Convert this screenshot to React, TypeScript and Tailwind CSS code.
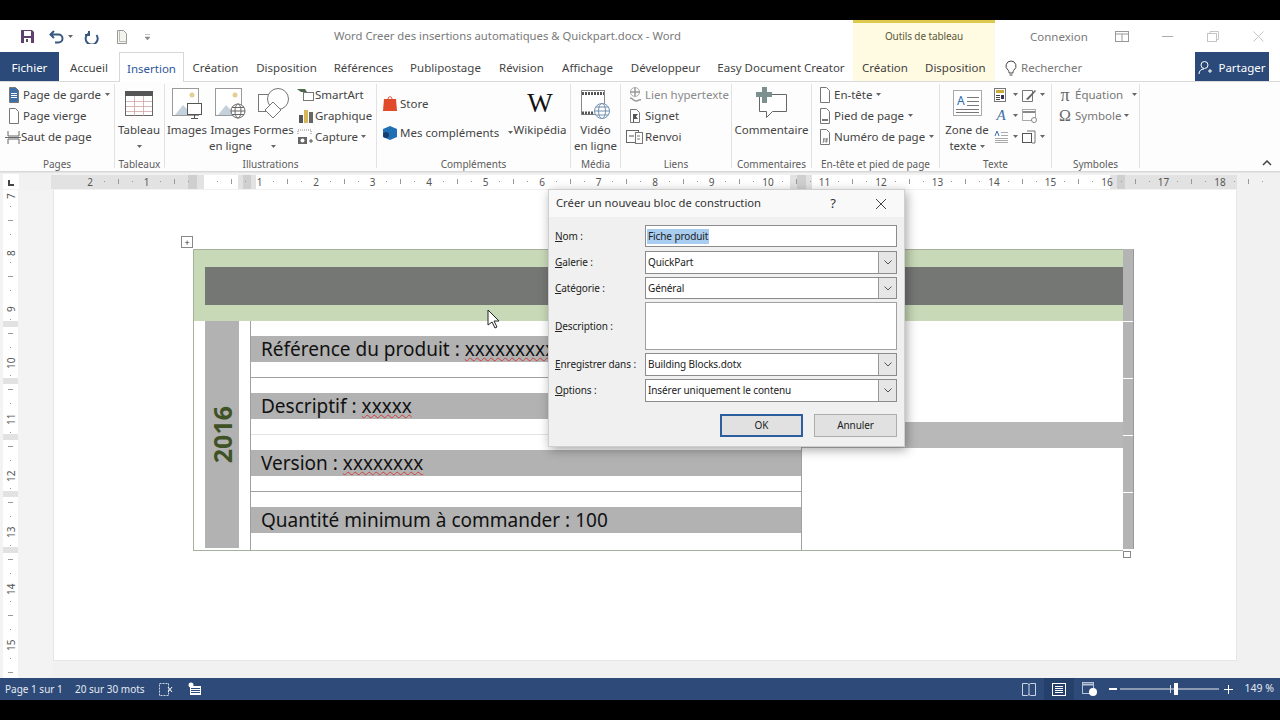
import React from "react";

const S = ({ w, h, children, className = "" }: { w: number; h: number; children: React.ReactNode; className?: string }) => (
  <svg width={w} height={h} viewBox={`0 0 ${w} ${h}`} fill="none" className={`shrink-0 ${className}`}>
    {children}
  </svg>
);

const Caret = ({ className = "" }: { className?: string }) => (
  <svg width="5" height="3" viewBox="0 0 5 3" className={`shrink-0 ${className}`}><path d="M0 0h5L2.5 3z" fill="#666" /></svg>
);

const PageIcon = ({ kind }: { kind: number }) => (
  <S w={14} h={16}>
    <path d="M2.5 .5h6l3 3v12h-9z" fill={kind === 0 ? "#3f6ea5" : "#fff"} stroke="#777" />
    {kind === 0 && <path d="M4 6.500h6M4 8.500h6M4 10.500h6" stroke="#fff" />}
    {kind === 2 && <path d="M4 12h6" stroke="#777" strokeWidth="2" />}
    {kind === 3 && <path d="M5 10h5M5 12h5M6 9l-1 5M9 9l-1 5" stroke="#666" strokeWidth=".7" />}
  </S>
);

const SmallItem = ({ icon, label, caret, muted, gap = "gap-[5px]" }: { icon: React.ReactNode; label: string; caret?: boolean; muted?: boolean; gap?: string }) => (
  <div className={`flex h-[21px] items-center ${gap} whitespace-nowrap ${muted ? "text-[#8a8a8a]" : ""}`}>
    {icon}
    <span>{label}</span>
    {caret && <Caret className="ml-[2px]" />}
  </div>
);

const Big = ({ width, icon, lines, caret, pad = "pt-[4px]" }: { width: string; icon: React.ReactNode; lines: string[]; caret?: boolean; pad?: string }) => (
  <div className={`flex shrink-0 flex-col items-center ${width}`}>
    <div className={`flex h-[38px] items-start justify-center ${pad}`}>{icon}</div>
    {lines.map((l) => (
      <div key={l} className="flex h-[16px] items-center gap-[3px] whitespace-nowrap">{l}{caret && l === "texte" && <Caret />}</div>
    ))}
    {caret && lines.length === 1 && <div className="flex h-[16px] items-center"><Caret /></div>}
  </div>
);

const Group = ({ width, label, children, last }: { width: string; label: string; children: React.ReactNode; last?: boolean }) => (
  <div className={`flex h-[84px] shrink-0 flex-col ${width} ${last ? "" : "border-r border-[#e2e2e2]"}`}>
    <div className="flex h-[72px] min-h-0 shrink-0">{children}</div>
    <div className="flex h-[16px] shrink-0 items-center justify-center whitespace-nowrap text-[10px] text-[#5c5c5c]">{label}</div>
  </div>
);

const ImgIcon = ({ badge }: { badge: "monitor" | "globe" }) => (
  <S w={31} h={31}>
    <rect x=".5" y=".5" width="26" height="27" fill="#fff" stroke="#9a9a9a" />
    <circle cx="20" cy="7" r="2.5" fill="#e3cf94" />
    <path d="M3 27l8-10 5 5 3-3 5 8z" fill="#c5d2dc" />
    {badge === "monitor" ? (
      <g><rect x="15.5" y="15.5" width="14" height="11" fill="#fff" stroke="#555" /><path d="M22.5 27v3M19 30.500h7" stroke="#555" /></g>
    ) : (
      <g stroke="#666" fill="#fff"><circle cx="23" cy="23" r="7" /><ellipse cx="23" cy="23" rx="3" ry="7" /><path d="M16 23h14M17 19.5h12M17 26.500h12" /></g>
    )}
  </S>
);

const GlobeVideo = () => (
  <S w={30} h={29}>
    <rect x=".5" y=".5" width="23" height="24" fill="#fff" stroke="#888" />
    <path d="M1 3.500h22" stroke="#555" strokeWidth="3" strokeDasharray="2 1" />
    <path d="M1 23h12" stroke="#555" strokeWidth="3" strokeDasharray="2 1" />
    <g stroke="#6f8fb0" fill="#fff"><circle cx="21" cy="21" r="7.500" /><ellipse cx="21" cy="21" rx="3.500" ry="7.500" /><path d="M13.500 21h15M15 17h12M15 25h12" /></g>
  </S>
);

const Tab = ({ w, children }: { w: string; children: React.ReactNode }) => (
  <div className={`flex h-[28px] shrink-0 items-center justify-center whitespace-nowrap pt-[2px] text-[#444] ${w}`}>{children}</div>
);

const RULER_H: (number | null)[] = [2, 1, null, 1, 2, 3, 4, 5, 6, 7, 8, 9, 10, 11, 12, 13, 14, 15, 16, 17, 18];

const HRuler = () => (
  <div className="flex h-[18px] shrink-0 items-center border-t border-[#e4e4e4] bg-[#f1f1f1]">
    <div className="ml-[3px] flex h-[15px] w-[16px] shrink-0 items-end justify-center bg-white pb-[3px]">
      <div className="h-[6px] w-[6px] border-b-2 border-l-2 border-[#444]" />
    </div>
    <div className="relative ml-[32px] flex h-[14px] w-[1186px] items-center bg-white text-[10px] text-[#555]">
      <div className="flex h-full w-[153px] shrink-0 justify-end bg-[#e2e2e2] pr-[7px]"><i className="h-full w-[9px] bg-[#cfcfcf]" /></div>
      <div className="w-[34px] shrink-0" />
      <div className="flex h-full w-[18px] shrink-0 justify-center bg-[#e2e2e2]"><i className="h-full w-[8px] bg-[#cfcfcf]" /></div>
      <div className="w-[534px] shrink-0" />
      <div className="flex h-full w-[22px] shrink-0 justify-center bg-[#e2e2e2]"><i className="h-full w-[9px] bg-[#cfcfcf]" /></div>
      <div className="w-[298px] shrink-0" />
      <div className="flex h-full flex-1 bg-[#e2e2e2] pl-[7px]"><i className="h-full w-[8px] bg-[#cfcfcf]" /></div>
      <div className="absolute inset-y-0 left-[32px] flex">
        {RULER_H.map((n, i) => (
          <div key={i} className="flex h-[14px] w-[56.5px] shrink-0 items-center">
            <span className="w-[14px] text-center leading-none">{n ?? ""}</span>
            <span className="flex w-[14px] justify-center"><i className="h-[1px] w-[1px] bg-[#999]" /></span>
            <span className="flex w-[14px] justify-center"><i className="h-[5px] w-[1px] bg-[#999]" /></span>
            <span className="flex w-[14px] justify-center"><i className="h-[1px] w-[1px] bg-[#999]" /></span>
          </div>
        ))}
      </div>
    </div>
  </div>
);

const VRuler = () => (
  <div className="flex w-[53px] shrink-0 overflow-hidden bg-[#f3f3f3]">
    <div className="ml-[3px] flex w-[15px] flex-col bg-white text-[10px] text-[#555]">
      {[7, 8, 9, 10, 11, 12, 13, 14, 15].map((n) => (
        <div key={n} className="relative flex h-[56.5px] shrink-0 -translate-y-[5px] flex-col items-center">
          <span className="flex h-[14px] items-center leading-none [writing-mode:vertical-rl] rotate-180">{n}</span>
          <span className="flex h-[14px] items-center"><i className="h-[1px] w-[1px] bg-[#999]" /></span>
          <span className="flex h-[14px] items-center"><i className="h-[1px] w-[5px] bg-[#999]" /></span>
          <span className="flex h-[14px] items-center"><i className="h-[1px] w-[1px] bg-[#999]" /></span>
          {n >= 9 && n <= 13 && <i className="absolute left-0 top-[23px] h-[6px] w-[15px] bg-[#e2e2e2]" />}
        </div>
      ))}
    </div>
  </div>
);

const Squiggle = ({ children }: { children: string }) => (
  <span className="underline decoration-[#d04040] decoration-wavy decoration-1 underline-offset-1">{children}</span>
);

const TableRow = ({ children, line }: { children: React.ReactNode; line: string }) => (
  <div className={`flex h-[57px] shrink-0 flex-col pt-[15px] ${line}`}>
    <div className="flex h-[26px] items-center whitespace-nowrap bg-[#b2b2b2] pl-[10px] text-[19px] text-[#111]">{children}</div>
  </div>
);

const DocTable = () => (
  <div className="flex w-[941px]">
    <div className="flex w-[930px] flex-col border border-r-0 border-[#a7b09c]">
      <div className="flex h-[71px] items-center bg-[#c8d9b8] pl-[11px]">
        <div className="h-[38px] flex-1 bg-[#757775]" />
      </div>
      <div className="flex h-[229px] bg-white">
        <div className="w-[11px] shrink-0" />
        <div className="flex h-[227px] w-[34px] shrink-0 items-center justify-center bg-[#b2b2b2]">
          <span className="rotate-180 text-[25px] font-bold leading-none text-[#3f5226] [writing-mode:vertical-rl]">2016</span>
        </div>
        <div className="w-[12px] shrink-0 border-r border-[#a0a0a0]" />
        <div className="flex w-[551px] shrink-0 flex-col border-r border-[#a0a0a0]">
          <TableRow line="border-b border-[#a0a0a0]"><span className="mr-[5px]">Référence du produit :</span><Squiggle>xxxxxxxxx</Squiggle></TableRow>
          <TableRow line="border-b border-[#e4e4e4]"><span className="mr-[5px]">Descriptif :</span><Squiggle>xxxxx</Squiggle></TableRow>
          <TableRow line="border-b border-[#a0a0a0]"><span className="mr-[5px]">Version :</span><Squiggle>xxxxxxxx</Squiggle></TableRow>
          <TableRow line="">Quantité minimum à commander : 100</TableRow>
        </div>
        <div className="flex-1 pt-[101px]">
          <div className="h-[26px] bg-[#b8b8b8]" />
        </div>
      </div>
    </div>
    <div className="flex h-[300px] w-[11px] flex-col gap-[1px] border-r border-[#999]">
      <div className="h-[72px] bg-[#b4b4b4]" />
      <div className="h-[56px] bg-[#b4b4b4]" />
      <div className="h-[56px] bg-[#b4b4b4]" />
      <div className="h-[56px] bg-[#b4b4b4]" />
      <div className="h-[56px] bg-[#b4b4b4]" />
    </div>
  </div>
);

const Field = ({ ul, rest, h, children, mt }: { ul: string; rest: string; h: string; children: React.ReactNode; mt: string }) => (
  <div className={`flex ${h} ${mt}`}>
    <div className="flex w-[90px] shrink-0 items-center whitespace-nowrap">
      <span className="underline underline-offset-1">{ul}</span>{rest}
    </div>
    {children}
  </div>
);

const Combo = ({ text }: { text: string }) => (
  <div className="flex w-[252px] items-center border border-[#8c8c8c] bg-white pl-[2px]">
    <span className="flex-1">{text}</span>
    <div className="flex h-full w-[18px] items-center justify-center border-l border-[#999] bg-[#e6e6e6]">
      <svg width="8" height="5" viewBox="0 0 8 5" fill="none"><path d="M.5.5L4 4 7.500.5" stroke="#555" /></svg>
    </div>
  </div>
);

const Dialog = () => (
  <div className="absolute left-[548px] top-[189px] flex h-[258px] w-[357px] flex-col border border-[#cfcfcf] bg-[#f0f0f0] text-[10px] tracking-[-0.1px] text-[#222] shadow-[2px_3px_10px_rgba(0,0,0,0.35)]">
    <div className="flex h-[27px] shrink-0 items-center bg-[#f9f9f9] pl-[7px] text-[11.25px] tracking-normal text-[#333]">
      <span className="flex-1">Créer un nouveau bloc de construction</span>
      <span className="mr-[39px] text-[13px]">?</span>
      <svg width="12" height="12" viewBox="0 0 12 12" className="mr-[17px]" fill="none"><path d="M1 1l10 10M11 1L1 11" stroke="#444" /></svg>
    </div>
    <div className="flex flex-1 flex-col pl-[6px]">
      <Field ul="N" rest="om :" h="h-[22px]" mt="mt-[8px]">
        <div className="flex w-[252px] items-center border border-[#8c8c8c] bg-white pl-[1px]"><span className="bg-[#a8cdf0] px-[1px]">Fiche produit</span></div>
      </Field>
      <Field ul="G" rest="alerie :" h="h-[23px]" mt="mt-[4px]"><Combo text="QuickPart" /></Field>
      <Field ul="C" rest="atégorie :" h="h-[22px]" mt="mt-[3px]"><Combo text="Général" /></Field>
      <Field ul="D" rest="escription :" h="h-[48px]" mt="mt-[3px]"><div className="w-[252px] border border-[#a0a0a0] bg-white" /></Field>
      <Field ul="E" rest="nregistrer dans :" h="h-[23px]" mt="mt-[3px]"><Combo text="Building Blocks.dotx" /></Field>
      <Field ul="O" rest="ptions :" h="h-[23px]" mt="mt-[3px]"><Combo text="Insérer uniquement le contenu" /></Field>
      <div className="mt-[12px] flex justify-end gap-[11px] pr-[7px]">
        <div className="flex h-[23px] w-[83px] items-center justify-center border-2 border-[#2d5f9e] bg-[#e1e1e1]">OK</div>
        <div className="flex h-[23px] w-[83px] items-center justify-center border border-[#adadad] bg-[#e1e1e1]">Annuler</div>
      </div>
    </div>
  </div>
);

export default function App() {
  return (
    <div className="relative flex h-[720px] w-[1280px] flex-col overflow-hidden bg-black font-['Noto_Sans',sans-serif] text-[11.5px] text-[#444]">
      <div className="h-[20px] shrink-0 bg-black" />
      {/* Title bar */}
      <div className="flex h-[33px] shrink-0 items-center bg-white">
        <div className="flex w-[334px] shrink-0 items-center">
          <S w={15} h={15} className="ml-[20px]">
            <path d="M1 1h11l2 2v11H1z" fill="#5f4170" /><rect x="4" y="2" width="7" height="5" fill="#fff" /><rect x="4" y="9" width="7" height="5" fill="#fff" /><rect x="6" y="10" width="2" height="3" fill="#555" />
          </S>
          <S w={16} h={15} className="ml-[14px]"><path d="M5 2L1.500 5.500 5 9M2 5.500h7.500a4 4 0 010 8H6" stroke="#39587f" strokeWidth="2" /></S>
          <Caret className="ml-[3px]" />
          <S w={15} h={15} className="ml-[11px]"><path d="M4.500 3.500A6 6 0 1012.500 5M5 1v4H1" stroke="#39587f" strokeWidth="2" transform="translate(0 1)" /></S>
          <S w={14} h={16} className="ml-[16px]"><path d="M2.500 1.500h6l3 3v10h-9z" fill="#f4f4ee" stroke="#999" /><path d="M4.500 1.500v11h7" stroke="#bbb" /></S>
          <S w={7} h={6} className="ml-[15px]"><path d="M1 .5h5M1 3h5l-2.500 3z" fill="#888" stroke="#888" strokeWidth=".5" /></S>
        </div>
        <div className="w-[519px] shrink-0 whitespace-nowrap text-[11.3px] text-[#7a7a7a]">Word Creer des insertions automatiques &amp; Quickpart.docx - Word</div>
        <div className="flex h-[33px] w-[142px] shrink-0 items-center justify-center self-start border-t-[3px] border-[#dcc94e] bg-[#fffbe3] pb-[3px] text-[10px] tracking-[-0.1px] text-[#5a5a3a]">
          Outils de tableau
        </div>
        <span className="ml-[35px] text-[11.5px] text-[#7a7a7a]">Connexion</span>
        <S w={14} h={11} className="ml-[27px]"><rect x=".5" y=".5" width="13" height="10" stroke="#999" /><path d="M.5 3h13M7 3v7" stroke="#999" /></S>
        <div className="ml-[33px] h-[1px] w-[11px] shrink-0 bg-[#aaa]" />
        <S w={12} h={11} className="ml-[34px]"><rect x=".5" y="2.500" width="9" height="8" stroke="#c4c4c4" /><path d="M3 2V.5h8.500v8H10" stroke="#c4c4c4" /></S>
        <S w={11} h={11} className="ml-[34px]"><path d="M.5.5l10 10M10.500.5l-10 10" stroke="#c4c4c4" /></S>
      </div>
      {/* Tabs */}
      <div className="flex h-[29px] shrink-0 items-end border-b border-[#dadada] bg-white">
        <div className="flex h-[29px] w-[59px] shrink-0 items-center justify-center bg-[#2b4a7a] pt-[2px] text-white">Fichier</div>
        <Tab w="w-[60px]">Accueil</Tab>
        <div className="relative z-10 -mb-[1px] flex h-[30px] w-[65px] shrink-0 items-center justify-center border border-b-0 border-[#d6d6d6] bg-white pt-[2px] text-[#2b579a]">Insertion</div>
        <Tab w="w-[63px]">Création</Tab>
        <Tab w="w-[79px]">Disposition</Tab>
        <Tab w="w-[75px]">Références</Tab>
        <Tab w="w-[89px]">Publipostage</Tab>
        <Tab w="w-[63px]">Révision</Tab>
        <Tab w="w-[69px]">Affichage</Tab>
        <Tab w="w-[87px]">Développeur</Tab>
        <Tab w="w-[144px]">Easy Document Creator</Tab>
        <div className="flex h-[28px] w-[142px] shrink-0 items-center bg-[#fffbe3] pl-[9px] pt-[2px] text-[#3f3f3f]">
          <span className="w-[63px]">Création</span><span>Disposition</span>
        </div>
        <div className="flex h-[28px] w-[200px] shrink-0 items-center pl-[10px] pt-[2px] text-[#777]">
          <S w={12} h={16} className="mr-[4px]"><path d="M6 1a5 5 0 00-3 9c1 1 1 2 1 3h4c0-1 0-2 1-3a5 5 0 00-3-9zM4.500 15h3" stroke="#444" /></S>
          Rechercher
        </div>
        <div className="flex h-[29px] w-[74px] shrink-0 items-center justify-center gap-[5px] bg-[#2b4a7a] pt-[2px] text-white">
          <S w={15} h={15}><circle cx="6.500" cy="5" r="3.500" stroke="#fff" /><path d="M1 14c0-3 2-5 5-5M10 11h4M12 9v4" stroke="#fff" /></S>
          Partager
        </div>
      </div>
      {/* Ribbon */}
      <div className="relative flex h-[90px] shrink-0 items-start border-b border-[#d8d8d8] bg-[#fdfdfd] pt-[2px] text-[#444]">
        <Group width="w-[115px]" label="Pages">
          <div className="flex flex-col pl-[7px]">
            <SmallItem icon={<PageIcon kind={0} />} label="Page de garde" caret gap="gap-[2px]" />
            <SmallItem icon={<PageIcon kind={1} />} label="Page vierge" gap="gap-[2px]" />
            <SmallItem icon={<S w={16} h={16} className="-ml-[2px]"><path d="M3 2v5h11V2M3 15v-5h11v5M0 8.500h16" stroke="#666" /></S>} label="Saut de page" gap="gap-0" />
          </div>
        </Group>
        <Group width="w-[50px]" label="Tableaux">
          <Big width="w-[48px]" pad="pt-[7px]" caret lines={["Tableau"]} icon={
            <S w={28} h={25}><rect x=".5" y=".5" width="27" height="24" fill="#fff" stroke="#666" /><rect x="0" y="0" width="28" height="5" fill="#555" /><path d="M1 10.500h26M1 15.500h26M1 20.500h26M9.500 5v20M18.500 5v20" stroke="#c99" strokeWidth=".7" /></S>
          } />
        </Group>
        <Group width="w-[212px]" label="Illustrations">
          <div className="flex">
            <Big width="w-[44px]" lines={["Images"]} icon={<ImgIcon badge="monitor" />} />
            <Big width="w-[43px]" lines={["Images", "en ligne"]} icon={<ImgIcon badge="globe" />} />
            <Big width="w-[43px]" caret lines={["Formes"]} icon={
              <S w={32} h={31}><rect x=".5" y="6.500" width="17" height="17" stroke="#777" fill="#fff" /><circle cx="20" cy="11" r="10.500" stroke="#777" fill="#fff" /><path d="M15 14l8 8-8 8-8-8z" stroke="#777" fill="#fff" /></S>
            } />
            <div className="flex flex-col pl-[2px]">
              <SmallItem icon={<S w={17} h={14}><path d="M0 1h8l2 3H4zM3 7l4-2" fill="#4d6a4d" /><rect x="6.500" y="4.500" width="10" height="8" stroke="#777" fill="#fff" /></S>} label="SmartArt" gap="gap-[1px]" />
              <SmallItem icon={<S w={17} h={14}><rect x="2" y="6" width="4" height="8" fill="#555" /><rect x="7" y="1" width="4" height="13" fill="#d6b656" /><rect x="12" y="3" width="4" height="11" fill="#666" /></S>} label="Graphique" gap="gap-[1px]" />
              <SmallItem icon={<S w={17} h={16}><path d="M1 5V1h13v4" stroke="#888" strokeDasharray="1 1" /><rect x="1" y="8" width="9" height="7" fill="#666" /><circle cx="5.500" cy="11.500" r="2" fill="#fff" /><path d="M12 12h4M14 10v4" stroke="#555" /></S>} label="Capture" caret gap="gap-[1px]" />
            </div>
          </div>
        </Group>
        <Group width="w-[194px]" label="Compléments">
          <div className="flex">
            <div className="flex w-[130px] flex-col pl-[6px] pt-[9px]">
              <SmallItem icon={<S w={14} h={15}><path d="M1 3h12l1 12H0z" fill="#e0492a" /><path d="M5 3c0-3 4-3 4 0" stroke="#e0492a" /></S>} label="Store" gap="gap-[3px]" />
              <div className="h-[8px]" />
              <div className="flex h-[21px] items-center gap-[3px] whitespace-nowrap">
                <S w={14} h={14}><path d="M7 0l7 3v8l-7 3-7-3V3z" fill="#1f6fb5" /><circle cx="3" cy="9" r="3" fill="#173f6b" /></S>
                <span>Mes compléments</span>
                <Caret className="ml-[6px]" />
              </div>
            </div>
            <div className="ml-[8px] flex w-[50px] flex-col items-center">
              <Big width="w-[50px]" pad="pt-[6px]" lines={["Wikipédia"]} icon={<span className="font-['Liberation_Serif',serif] text-[27px] leading-[26px] text-[#111]">W</span>} />
            </div>
          </div>
        </Group>
        <Group width="w-[50px]" label="Média">
          <Big width="w-[49px]" pad="pt-[6px]" lines={["Vidéo", "en ligne"]} icon={<GlobeVideo />} />
        </Group>
        <Group width="w-[111px]" label="Liens">
          <div className="flex flex-col pl-[7px]">
            <SmallItem muted icon={<S w={14} h={16}><circle cx="7" cy="5" r="4.500" stroke="#aaa" /><path d="M2 5h10M7 1v8M2 11c3 0 3 3 6 3s3-2 5-1" stroke="#999" strokeWidth="1.500" /></S>} label="Lien hypertexte" gap="gap-[3px]" />
            <SmallItem icon={<S w={14} h={16}><path d="M2.500 1.500h6l3 3v10h-9z" fill="#fff" stroke="#777" /><path d="M5 6h5l-2 2.500 2 2.500H6v3H5z" fill="#555" /></S>} label="Signet" gap="gap-[3px]" />
            <SmallItem icon={<S w={18} h={16} className="-ml-[2px]"><rect x=".5" y="1.500" width="12" height="12" stroke="#666" /><path d="M3 7h5" stroke="#555" /><rect x="9.500" y="3.500" width="7" height="11" fill="#fff" stroke="#777" /><path d="M11 7h3M11 10h3" stroke="#777" /></S>} label="Renvoi" gap="gap-[1px]" />
          </div>
        </Group>
        <Group width="w-[80px]" label="Commentaires">
          <Big width="w-[79px]" pad="pt-[3px]" lines={["Commentaire"]} icon={
            <S w={32} h={31}><path d="M3.500 7.500h27v17h-14l-6 6v-6h-7z" fill="#fff" stroke="#666" /><path d="M6 0h5v5h5v5h-5v6H6v-6H0V5h6z" fill="#7c9090" /></S>
          } />
        </Group>
        <Group width="w-[128px]" label="En-tête et pied de page">
          <div className="flex flex-col pl-[6px]">
            <SmallItem icon={<PageIcon kind={1} />} label="En-tête" caret gap="gap-[2px]" />
            <SmallItem icon={<PageIcon kind={2} />} label="Pied de page" caret gap="gap-[2px]" />
            <SmallItem icon={<PageIcon kind={3} />} label="Numéro de page" caret gap="gap-[2px]" />
          </div>
        </Group>
        <Group width="w-[112px]" label="Texte">
          <Big width="w-[54px]" pad="pt-[6px]" caret lines={["Zone de", "texte"]} icon={
            <S w={29} h={26}><rect x=".5" y=".5" width="28" height="25" fill="#fff" stroke="#aaa" /><text x="4" y="15" fontSize="12" fill="#2b6cb0" fontFamily="Noto Sans">A</text><path d="M14 7.500h12M14 11.500h12M14 15.500h12M3 19.500h23M3 22.500h23" stroke="#777" /></S>
          } />
          <div className="grid h-[63px] w-[56px] grid-cols-2 grid-rows-3 items-center justify-items-start">
            <div className="flex items-center gap-[5px]"><S w={14} h={14}><rect x=".5" y=".5" width="11" height="13" fill="#fff" stroke="#777" /><rect x="2" y="2" width="8" height="3" fill="#c8a93c" /><path d="M2 7.500h4M2 9.500h4M2 11.500h4" stroke="#444" /><rect x="7" y="7" width="3" height="4" fill="#335" /></S><Caret /></div>
            <div className="flex items-center gap-[3px]"><S w={15} h={14}><path d="M.5 2.500h10v11H.5z" fill="#fff" stroke="#777" /><path d="M4 11l9-9 1 1-8 9z" fill="#666" /></S><Caret /></div>
            <div className="flex items-center gap-[5px]"><span className="w-[14px] text-center font-['Liberation_Serif',serif] text-[15px] italic leading-none text-[#3a6ea5]">A</span><Caret /></div>
            <S w={16} h={14}><rect x=".5" y=".5" width="13" height="11" fill="#fff" stroke="#aaa" /><path d="M1 3h12" stroke="#888" strokeWidth="2" /><circle cx="12" cy="11" r="2.500" stroke="#888" fill="#fff" /></S>
            <div className="flex items-center gap-[5px]"><S w={14} h={14}><path d="M7 2.500h7M7 5.500h7M1 8.500h13M1 10.500h13M1 12.500h13" stroke="#aaa" /><path d="M1 6l2-5 2 5" stroke="#3a6ea5" /></S><Caret /></div>
            <div className="flex items-center gap-[3px]"><S w={15} h={14}><rect x=".5" y="3.500" width="9" height="9" stroke="#555" /><path d="M5 1h8v12h-3" stroke="#777" /></S><Caret /></div>
          </div>
        </Group>
        <Group width="w-[88px]" label="Symboles">
          <div className="flex flex-col pl-[6px] text-[#777]">
            <div className="flex h-[21px] items-center gap-[3px] whitespace-nowrap"><span className="w-[14px] text-center font-['Liberation_Serif',serif] text-[18px] leading-none text-[#666]">π</span>Équation<Caret className="ml-[6px]" /></div>
            <div className="flex h-[21px] items-center gap-[3px] whitespace-nowrap"><span className="w-[14px] text-center font-['Liberation_Serif',serif] text-[16px] leading-none text-[#666]">Ω</span>Symbole<Caret /></div>
          </div>
        </Group>
        <svg width="10" height="6" viewBox="0 0 10 6" fill="none" className="absolute left-[1262px] top-[78px]"><path d="M1 5l4-4 4 4" stroke="#444" strokeWidth="1.500" /></svg>
      </div>
      <HRuler />
      {/* Document area */}
      <div className="flex h-[488px] shrink-0 bg-[#f1f1f1]">
        <VRuler />
        <div className="flex h-[471px] w-[1184px] shrink-0 flex-col border-x border-b border-[#e6e6e6] bg-white pl-[139px] pt-[59px]">
          <DocTable />
        </div>
      </div>
      {/* Status bar */}
      <div className="flex h-[22px] shrink-0 items-center bg-[#2d4a78] text-[10px] text-[#e6ebf3]">
        <span className="ml-[5px] w-[70px]">Page 1 sur 1</span>
        <span className="w-[84px]">20 sur 30 mots</span>
        <S w={15} h={13}><rect x=".5" y=".5" width="9" height="12" stroke="#cdd6e4" strokeDasharray="2 1" /><path d="M9 4l4 5M13 4L9 9" stroke="#fff" /></S>
        <S w={14} h={14} className="ml-[14px]"><circle cx="3" cy="3" r="2.500" fill="#fff" /><rect x="2" y="4" width="11" height="9" fill="#fff" /><path d="M3 6.500h9M3 8.500h9M3 10.500h9" stroke="#2d4a78" /></S>
        <div className="flex-1" />
        <S w={14} h={13}><path d="M.5.5h5l1.500 1 1.500-1h5v12h-5L7 11.500 5.500 12.500h-5z" stroke="#cdd6e4" /><path d="M7 1v11" stroke="#cdd6e4" /></S>
        <div className="ml-[8px] flex h-[22px] w-[30px] items-center justify-center bg-[#24406b]">
          <S w={14} h={13}><rect x=".5" y=".5" width="13" height="12" stroke="#fff" /><path d="M3 3.500h8M3 5.500h8M3 7.500h8M3 9.500h8" stroke="#fff" /></S>
        </div>
        <S w={15} h={14} className="ml-[8px]"><rect x=".5" y=".5" width="11" height="11" stroke="#b8c4d6" /><path d="M1 2.500h10" stroke="#b8c4d6" strokeWidth="2" /><circle cx="11" cy="10" r="4" fill="#fff" /></S>
        <div className="ml-[12px] h-[2px] w-[8px] bg-white" />
        <div className="relative ml-[3px] h-[2px] w-[99px] bg-[#8b9ab2]">
          <i className="absolute left-[50px] top-[-3px] h-[8px] w-[1px] bg-[#cdd6e4]" />
          <i className="absolute left-[54px] top-[-5px] h-[12px] w-[4px] bg-white" />
        </div>
        <span className="relative ml-[5px] h-[9px] w-[9px]">
          <i className="absolute left-0 top-[4px] h-[1.500px] w-[9px] bg-white" />
          <i className="absolute left-[4px] top-0 h-[9px] w-[1.500px] bg-white" />
        </span>
        <span className="ml-[12px] mr-[6px] whitespace-nowrap text-[10.5px]">149 %</span>
      </div>
      <div className="h-[20px] shrink-0 bg-black" />
      {/* Overlays */}
      <div className="absolute left-[181px] top-[236px] flex h-[12px] w-[12px] items-center justify-center border border-[#888] bg-white text-[9px] leading-none text-[#333]">+</div>
      <div className="absolute left-[1123px] top-[551px] h-[7px] w-[8px] border border-[#888] bg-white" />
      <Dialog />
      <svg width="14" height="20" viewBox="0 0 14 20" className="absolute left-[487px] top-[309px]"><path d="M1 1v15l4-3 3 6 2-1-3-6h5z" fill="#fff" stroke="#222" /></svg>
    </div>
  );
}
